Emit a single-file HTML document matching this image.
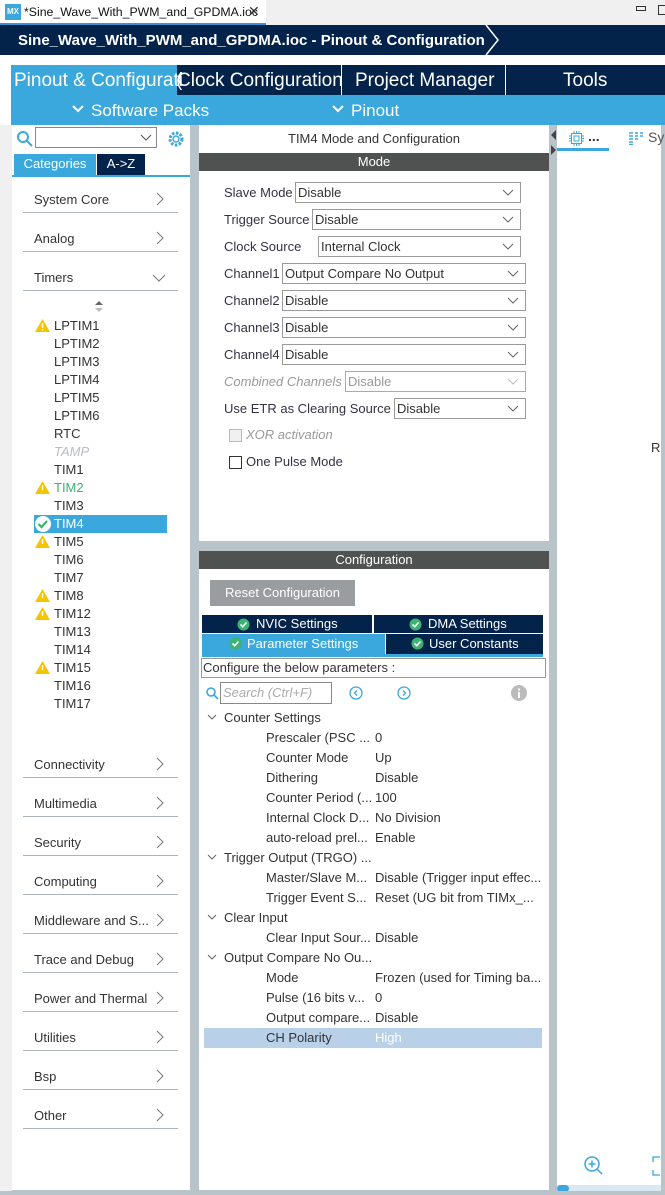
<!DOCTYPE html>
<html><head><meta charset="utf-8"><style>
*{margin:0;padding:0;box-sizing:border-box}
body{width:665px;height:1195px;position:relative;overflow:hidden;background:#b9c4ca;font-family:"Liberation Sans",sans-serif;font-size:13px;color:#333345}
.a{position:absolute;white-space:nowrap}
.t{line-height:18px}
.cb{position:absolute;height:21px;border:1px solid #9a9a9a;background:#fff;line-height:19px;padding-left:2px;font-size:13px;color:#333}
.cb svg{position:absolute;right:6px;top:6px}
.cat{position:absolute;left:34px;font-size:13px;color:#333;line-height:16px}
.ln{position:absolute;left:23px;width:155px;height:1px;background:#aab4ba}
.chev{position:absolute;left:155px}
.ti{position:absolute;left:54px;line-height:18px;font-size:13px;color:#333}
.w{position:absolute;left:35px}
.pr{position:absolute;line-height:20px;font-size:13px;color:#333}
</style></head><body>
<div class="a" style="left:0;top:0;width:665px;height:25px;background:#f0f0f0"></div>
<div class="a" style="left:0;top:0;width:266px;height:25px;background:#fff;border-bottom:2px solid #3d8fd6"></div>
<div class="a" style="left:5px;top:4px;width:16px;height:16px;background:#3aa8dc;color:#fff;font-size:8px;font-weight:bold;line-height:16px;text-align:center">MX</div>
<div class="a t" style="left:24px;top:3px;font-size:12.3px;color:#111">*Sine_Wave_With_PWM_and_GPDMA.ioc</div>
<div class="a" style="left:248px;top:3px;font-size:14px;color:#333">✕</div>
<div class="a" style="left:636px;top:6px;width:10px;height:5px;border:1px solid #333"></div>
<div class="a" style="left:658px;top:5px;width:10px;height:10px;border:1px solid #333"></div>
<div class="a" style="left:0;top:25px;width:665px;height:30px;background:#03234b"></div>
<div class="a" style="left:18px;top:32px;font-size:15px;font-weight:bold;color:#fff">Sine_Wave_With_PWM_and_GPDMA.ioc - Pinout &amp; Configuration</div>
<svg class="a" style="left:484px;top:25px" width="20" height="30"><path d="M2 0 L14 15 L2 30" stroke="#fff" stroke-width="1.5" fill="none"/></svg>
<div class="a" style="left:0;top:55px;width:665px;height:10px;background:#fff"></div>
<div class="a" style="left:0;top:65px;width:11px;height:60px;background:#fff"></div>
<div class="a" style="left:11px;top:65px;width:654px;height:30px;background:#03234b"></div>
<div class="a" style="left:11px;top:65px;width:166px;height:30px;background:#3aa8dc"></div>
<div class="a" style="left:341px;top:65px;width:1px;height:30px;background:#fff"></div>
<div class="a" style="left:505px;top:65px;width:1px;height:30px;background:#fff"></div>
<div class="a" style="left:14px;top:70px;font-size:19px;color:#fff">Pinout &amp; Configurati</div>
<div class="a" style="left:177px;top:70px;font-size:19px;color:#fff;width:164px;overflow:hidden">Clock Configuration</div>
<div class="a" style="left:176px;top:70px;font-size:19px;color:#fff">(</div>
<div class="a" style="left:355px;top:70px;font-size:19px;color:#fff">Project Manager</div>
<div class="a" style="left:563px;top:70px;font-size:19px;color:#fff">Tools</div>
<div class="a" style="left:11px;top:95px;width:654px;height:30px;background:#3aa8dc"></div>
<svg class="a" style="left:71px;top:104px" width="14" height="10"><path d="M2 2 L7 7 L12 2" stroke="#fff" stroke-width="2" fill="none"/></svg>
<div class="a" style="left:91px;top:101px;font-size:17px;color:#fff">Software Packs</div>
<svg class="a" style="left:331px;top:104px" width="14" height="10"><path d="M2 2 L7 7 L12 2" stroke="#fff" stroke-width="2" fill="none"/></svg>
<div class="a" style="left:351px;top:101px;font-size:17px;color:#fff">Pinout</div>
<div class="a" style="left:0;top:125px;width:12px;height:1070px;background:#f0f0f0"></div>
<div class="a" style="left:12px;top:125px;width:178px;height:1065px;background:#fff"></div>
<svg class="a" style="left:16px;top:130px" width="18" height="18"><circle cx="7" cy="7" r="5" stroke="#3aa8dc" stroke-width="2" fill="none"/><path d="M11 11 L16 16" stroke="#3aa8dc" stroke-width="2"/></svg>
<div class="a" style="left:35px;top:127px;width:122px;height:21px;border:1px solid #888;background:#fff"></div>
<svg class="a" style="left:140px;top:134px" width="12" height="8"><path d="M1 1 L6 6 L11 1" stroke="#555" fill="none"/></svg>
<svg class="a" style="left:166px;top:129px" width="20" height="20"><circle cx="10" cy="10" r="6" stroke="#3aa8dc" stroke-width="3" fill="none" stroke-dasharray="2.5 1.5"/><circle cx="10" cy="10" r="3" stroke="#3aa8dc" stroke-width="1.5" fill="none"/></svg>
<div class="a" style="left:14px;top:154px;width:82px;height:21px;background:#3aa8dc;color:#fff;line-height:20px;text-align:center;font-size:13px">Categories</div>
<div class="a" style="left:97px;top:154px;width:48px;height:21px;background:#03234b;color:#fff;line-height:20px;text-align:center;font-size:13px">A-&gt;Z</div>
<div class="a" style="left:12px;top:175px;width:178px;height:2px;background:#3aa8dc"></div>

<div class="cat" style="top:192px">System Core</div><svg class="a chev" style="top:192px" width="10" height="14"><path d="M2 1 L8 7 L2 13" stroke="#777" fill="none"/></svg><div class="ln" style="top:212px"></div>
<div class="cat" style="top:231px">Analog</div><svg class="a chev" style="top:231px" width="10" height="14"><path d="M2 1 L8 7 L2 13" stroke="#777" fill="none"/></svg><div class="ln" style="top:251px"></div>
<div class="cat" style="top:270px">Timers</div><svg class="a" style="left:152px;top:273px" width="14" height="10"><path d="M1 2 L7 8 L13 2" stroke="#777" fill="none"/></svg><div class="ln" style="top:290px"></div>
<svg class="a" style="left:94px;top:300px" width="10" height="14"><path d="M1 5 L5 1 L9 5Z" fill="#666"/><path d="M1 8 L5 12 L9 8Z" fill="#bbb"/></svg>

<svg class="a w" style="top:319px" width="15" height="13"><path d="M7.5 0 L15 13 L0 13Z" fill="#f5c400"/><rect x="6.8" y="4" width="1.4" height="5" fill="#fff"/><rect x="6.8" y="10" width="1.4" height="1.5" fill="#fff"/></svg>
<div class="ti" style="top:317px">LPTIM1</div>
<div class="ti" style="top:335px">LPTIM2</div>
<div class="ti" style="top:353px">LPTIM3</div>
<div class="ti" style="top:371px">LPTIM4</div>
<div class="ti" style="top:389px">LPTIM5</div>
<div class="ti" style="top:407px">LPTIM6</div>
<div class="ti" style="top:425px">RTC</div>
<div class="ti" style="top:443px;color:#b8bcc4;font-style:italic">TAMP</div>
<div class="ti" style="top:461px">TIM1</div>
<svg class="a w" style="top:481px" width="15" height="13"><path d="M7.5 0 L15 13 L0 13Z" fill="#f5c400"/><rect x="6.8" y="4" width="1.4" height="5" fill="#fff"/></svg>
<div class="ti" style="top:479px;color:#3cb371">TIM2</div>
<div class="ti" style="top:497px">TIM3</div>
<div class="a" style="left:34px;top:515px;width:133px;height:18px;background:#3aa8dc"></div>
<svg class="a" style="left:34px;top:515px" width="18" height="18"><circle cx="9" cy="9" r="8" fill="#fff"/><path d="M4.5 9 L7.5 12 L13 6" stroke="#3cb371" stroke-width="2.2" fill="none"/></svg>
<div class="ti" style="top:515px;color:#fff">TIM4</div>
<svg class="a w" style="top:535px" width="15" height="13"><path d="M7.5 0 L15 13 L0 13Z" fill="#f5c400"/><rect x="6.8" y="4" width="1.4" height="5" fill="#fff"/></svg>
<div class="ti" style="top:533px">TIM5</div>
<div class="ti" style="top:551px">TIM6</div>
<div class="ti" style="top:569px">TIM7</div>
<svg class="a w" style="top:589px" width="15" height="13"><path d="M7.5 0 L15 13 L0 13Z" fill="#f5c400"/><rect x="6.8" y="4" width="1.4" height="5" fill="#fff"/></svg>
<div class="ti" style="top:587px">TIM8</div>
<svg class="a w" style="top:607px" width="15" height="13"><path d="M7.5 0 L15 13 L0 13Z" fill="#f5c400"/><rect x="6.8" y="4" width="1.4" height="5" fill="#fff"/></svg>
<div class="ti" style="top:605px">TIM12</div>
<div class="ti" style="top:623px">TIM13</div>
<div class="ti" style="top:641px">TIM14</div>
<svg class="a w" style="top:661px" width="15" height="13"><path d="M7.5 0 L15 13 L0 13Z" fill="#f5c400"/><rect x="6.8" y="4" width="1.4" height="5" fill="#fff"/></svg>
<div class="ti" style="top:659px">TIM15</div>
<div class="ti" style="top:677px">TIM16</div>
<div class="ti" style="top:695px">TIM17</div>

<div class="cat" style="top:757px">Connectivity</div><svg class="a chev" style="top:757px" width="10" height="14"><path d="M2 1 L8 7 L2 13" stroke="#777" fill="none"/></svg><div class="ln" style="top:777px"></div>
<div class="cat" style="top:796px">Multimedia</div><svg class="a chev" style="top:796px" width="10" height="14"><path d="M2 1 L8 7 L2 13" stroke="#777" fill="none"/></svg><div class="ln" style="top:816px"></div>
<div class="cat" style="top:835px">Security</div><svg class="a chev" style="top:835px" width="10" height="14"><path d="M2 1 L8 7 L2 13" stroke="#777" fill="none"/></svg><div class="ln" style="top:855px"></div>
<div class="cat" style="top:874px">Computing</div><svg class="a chev" style="top:874px" width="10" height="14"><path d="M2 1 L8 7 L2 13" stroke="#777" fill="none"/></svg><div class="ln" style="top:894px"></div>
<div class="cat" style="top:913px">Middleware and S...</div><svg class="a chev" style="top:913px" width="10" height="14"><path d="M2 1 L8 7 L2 13" stroke="#777" fill="none"/></svg><div class="ln" style="top:933px"></div>
<div class="cat" style="top:952px">Trace and Debug</div><svg class="a chev" style="top:952px" width="10" height="14"><path d="M2 1 L8 7 L2 13" stroke="#777" fill="none"/></svg><div class="ln" style="top:972px"></div>
<div class="cat" style="top:991px">Power and Thermal</div><svg class="a chev" style="top:991px" width="10" height="14"><path d="M2 1 L8 7 L2 13" stroke="#777" fill="none"/></svg><div class="ln" style="top:1011px"></div>
<div class="cat" style="top:1030px">Utilities</div><svg class="a chev" style="top:1030px" width="10" height="14"><path d="M2 1 L8 7 L2 13" stroke="#777" fill="none"/></svg><div class="ln" style="top:1050px"></div>
<div class="cat" style="top:1069px">Bsp</div><svg class="a chev" style="top:1069px" width="10" height="14"><path d="M2 1 L8 7 L2 13" stroke="#777" fill="none"/></svg><div class="ln" style="top:1089px"></div>
<div class="cat" style="top:1108px">Other</div><svg class="a chev" style="top:1108px" width="10" height="14"><path d="M2 1 L8 7 L2 13" stroke="#777" fill="none"/></svg><div class="ln" style="top:1128px"></div>

<div class="a" style="left:199px;top:125px;width:350px;height:416px;background:#fff"></div>
<div class="a" style="left:199px;top:131px;width:350px;text-align:center;font-size:13px;color:#333">TIM4 Mode and Configuration</div>
<div class="a" style="left:199px;top:153px;width:350px;height:18px;background:#505251;color:#fff;text-align:center;line-height:18px;font-size:13px">Mode</div>

<div class="a t" style="left:224px;top:184px">Slave Mode</div>
<div class="cb" style="left:295px;top:182px;width:226px">Disable<svg width="12" height="8"><path d="M1 1 L6 6 L11 1" stroke="#666" fill="none"/></svg></div>
<div class="a t" style="left:224px;top:211px">Trigger Source</div>
<div class="cb" style="left:312px;top:209px;width:209px">Disable<svg width="12" height="8"><path d="M1 1 L6 6 L11 1" stroke="#666" fill="none"/></svg></div>
<div class="a t" style="left:224px;top:238px">Clock Source</div>
<div class="cb" style="left:318px;top:236px;width:203px">Internal Clock<svg width="12" height="8"><path d="M1 1 L6 6 L11 1" stroke="#666" fill="none"/></svg></div>
<div class="a t" style="left:224px;top:265px">Channel1</div>
<div class="cb" style="left:282px;top:263px;width:244px">Output Compare No Output<svg width="12" height="8"><path d="M1 1 L6 6 L11 1" stroke="#666" fill="none"/></svg></div>
<div class="a t" style="left:224px;top:292px">Channel2</div>
<div class="cb" style="left:282px;top:290px;width:244px">Disable<svg width="12" height="8"><path d="M1 1 L6 6 L11 1" stroke="#666" fill="none"/></svg></div>
<div class="a t" style="left:224px;top:319px">Channel3</div>
<div class="cb" style="left:282px;top:317px;width:244px">Disable<svg width="12" height="8"><path d="M1 1 L6 6 L11 1" stroke="#666" fill="none"/></svg></div>
<div class="a t" style="left:224px;top:346px">Channel4</div>
<div class="cb" style="left:282px;top:344px;width:244px">Disable<svg width="12" height="8"><path d="M1 1 L6 6 L11 1" stroke="#666" fill="none"/></svg></div>
<div class="a t" style="left:224px;top:373px;color:#999;font-style:italic">Combined Channels</div>
<div class="cb" style="left:345px;top:371px;width:181px;color:#999;border-color:#aaa">Disable<svg width="12" height="8"><path d="M1 1 L6 6 L11 1" stroke="#bbb" fill="none"/></svg></div>
<div class="a t" style="left:224px;top:400px">Use ETR as Clearing Source</div>
<div class="cb" style="left:394px;top:398px;width:132px">Disable<svg width="12" height="8"><path d="M1 1 L6 6 L11 1" stroke="#666" fill="none"/></svg></div>
<div class="a" style="left:229px;top:429px;width:13px;height:13px;border:1px solid #bbb;background:#f0f0f0"></div>
<div class="a t" style="left:246px;top:426px;color:#999;font-style:italic">XOR activation</div>
<div class="a" style="left:229px;top:456px;width:13px;height:13px;border:1px solid #333;background:#fff"></div>
<div class="a t" style="left:246px;top:453px">One Pulse Mode</div>

<div class="a" style="left:199px;top:551px;width:350px;height:639px;background:#fff"></div>
<div class="a" style="left:199px;top:551px;width:350px;height:18px;background:#505251;color:#fff;text-align:center;line-height:18px;font-size:13px">Configuration</div>
<div class="a" style="left:210px;top:580px;width:145px;height:26px;background:#9a9d9f;color:#fff;text-align:center;line-height:26px;font-size:13px">Reset Configuration</div>
<div class="a" style="left:202px;top:615px;width:170px;height:18px;background:#03234b"></div>
<div class="a" style="left:374px;top:615px;width:169px;height:18px;background:#03234b"></div>
<div class="a" style="left:202px;top:634px;width:183px;height:20px;background:#3aa8dc"></div>
<div class="a" style="left:386px;top:634px;width:157px;height:20px;background:#03234b"></div>
<div class="a" style="left:202px;top:654px;width:341px;height:3px;background:#3aa8dc"></div>
<svg class="a" style="left:237px;top:618px" width="13" height="13"><circle cx="6.5" cy="6.5" r="6" fill="#3cb371"/><path d="M3.5 6.5 L5.7 8.7 L9.5 4.5" stroke="#fff" stroke-width="1.6" fill="none"/></svg>
<div class="a t" style="left:256px;top:615px;color:#fff">NVIC Settings</div>
<svg class="a" style="left:409px;top:618px" width="13" height="13"><circle cx="6.5" cy="6.5" r="6" fill="#3cb371"/><path d="M3.5 6.5 L5.7 8.7 L9.5 4.5" stroke="#fff" stroke-width="1.6" fill="none"/></svg>
<div class="a t" style="left:428px;top:615px;color:#fff">DMA Settings</div>
<svg class="a" style="left:229px;top:637px" width="13" height="13"><circle cx="6.5" cy="6.5" r="6" fill="#3cb371"/><path d="M3.5 6.5 L5.7 8.7 L9.5 4.5" stroke="#fff" stroke-width="1.6" fill="none"/></svg>
<div class="a t" style="left:247px;top:635px;color:#fff">Parameter Settings</div>
<svg class="a" style="left:411px;top:637px" width="13" height="13"><circle cx="6.5" cy="6.5" r="6" fill="#3cb371"/><path d="M3.5 6.5 L5.7 8.7 L9.5 4.5" stroke="#fff" stroke-width="1.6" fill="none"/></svg>
<div class="a t" style="left:429px;top:635px;color:#fff">User Constants</div>
<div class="a" style="left:201px;top:658px;width:345px;height:20px;border:1px solid #999;line-height:18px;padding-left:1px;color:#333">Configure the below parameters :</div>
<svg class="a" style="left:206px;top:687px" width="13" height="13"><circle cx="5" cy="5" r="4" stroke="#3aa8dc" stroke-width="1.6" fill="none"/><path d="M8 8 L12 12" stroke="#3aa8dc" stroke-width="1.6"/></svg>
<div class="a" style="left:220px;top:682px;width:112px;height:22px;border:1px solid #888;line-height:20px;padding-left:2px;color:#aaa;font-style:italic">Search (Ctrl+F)</div>
<svg class="a" style="left:349px;top:686px" width="14" height="14"><circle cx="7" cy="7" r="6" stroke="#3aa8dc" stroke-width="1.3" fill="none"/><path d="M8 4.5 L5.5 7 L8 9.5" stroke="#3aa8dc" stroke-width="1.3" fill="none"/></svg>
<svg class="a" style="left:397px;top:686px" width="14" height="14"><circle cx="7" cy="7" r="6" stroke="#3aa8dc" stroke-width="1.3" fill="none"/><path d="M6 4.5 L8.5 7 L6 9.5" stroke="#3aa8dc" stroke-width="1.3" fill="none"/></svg>
<svg class="a" style="left:511px;top:685px" width="16" height="16"><circle cx="8" cy="8" r="8" fill="#bbb"/><rect x="7" y="7" width="2" height="6" fill="#fff"/><rect x="7" y="3.5" width="2" height="2" fill="#fff"/></svg>

<div class="a" style="left:204px;top:1028px;width:338px;height:20px;background:#b8d0e8"></div>
<svg class="a" style="left:207px;top:714px" width="10" height="8"><path d="M1 1 L5 5 L9 1" stroke="#666" fill="none"/></svg>
<div class="pr" style="left:224px;top:708px">Counter Settings</div>
<div class="pr" style="left:266px;top:728px">Prescaler (PSC ...</div><div class="pr" style="left:375px;top:728px">0</div>
<div class="pr" style="left:266px;top:748px">Counter Mode</div><div class="pr" style="left:375px;top:748px">Up</div>
<div class="pr" style="left:266px;top:768px">Dithering</div><div class="pr" style="left:375px;top:768px">Disable</div>
<div class="pr" style="left:266px;top:788px">Counter Period (...</div><div class="pr" style="left:375px;top:788px">100</div>
<div class="pr" style="left:266px;top:808px">Internal Clock D...</div><div class="pr" style="left:375px;top:808px">No Division</div>
<div class="pr" style="left:266px;top:828px">auto-reload prel...</div><div class="pr" style="left:375px;top:828px">Enable</div>
<svg class="a" style="left:207px;top:854px" width="10" height="8"><path d="M1 1 L5 5 L9 1" stroke="#666" fill="none"/></svg>
<div class="pr" style="left:224px;top:848px">Trigger Output (TRGO) ...</div>
<div class="pr" style="left:266px;top:868px">Master/Slave M...</div><div class="pr" style="left:375px;top:868px">Disable (Trigger input effec...</div>
<div class="pr" style="left:266px;top:888px">Trigger Event S...</div><div class="pr" style="left:375px;top:888px">Reset (UG bit from TIMx_...</div>
<svg class="a" style="left:207px;top:914px" width="10" height="8"><path d="M1 1 L5 5 L9 1" stroke="#666" fill="none"/></svg>
<div class="pr" style="left:224px;top:908px">Clear Input</div>
<div class="pr" style="left:266px;top:928px">Clear Input Sour...</div><div class="pr" style="left:375px;top:928px">Disable</div>
<svg class="a" style="left:207px;top:954px" width="10" height="8"><path d="M1 1 L5 5 L9 1" stroke="#666" fill="none"/></svg>
<div class="pr" style="left:224px;top:948px">Output Compare No Ou...</div>
<div class="pr" style="left:266px;top:968px">Mode</div><div class="pr" style="left:375px;top:968px">Frozen (used for Timing ba...</div>
<div class="pr" style="left:266px;top:988px">Pulse (16 bits v...</div><div class="pr" style="left:375px;top:988px">0</div>
<div class="pr" style="left:266px;top:1008px">Output compare...</div><div class="pr" style="left:375px;top:1008px">Disable</div>
<div class="pr" style="left:266px;top:1028px">CH Polarity</div><div class="pr" style="left:375px;top:1028px;color:#fff">High</div>

<div class="a" style="left:550px;top:125px;width:7px;height:1070px;background:#b9c4ca"></div>
<svg class="a" style="left:550px;top:128px" width="7" height="30"><path d="M6 2 L1 7 L6 12Z" fill="#444"/><path d="M1 17 L6 22 L1 27Z" fill="#444"/></svg>
<div class="a" style="left:557px;top:125px;width:104px;height:1065px;background:#fff"></div>
<svg class="a" style="left:569px;top:131px" width="15" height="15"><rect x="2.5" y="2.5" width="10" height="10" stroke="#3aa8dc" fill="none"/><rect x="5" y="5" width="5" height="5" stroke="#3aa8dc" fill="none"/><path d="M5 0V2M7.5 0V2M10 0V2M5 13V15M7.5 13V15M10 13V15M0 5H2M0 7.5H2M0 10H2M13 5H15M13 7.5H15M13 10H15" stroke="#3aa8dc"/></svg>
<div class="a" style="left:588px;top:128px;font-size:14px;color:#333;font-weight:bold">...</div>
<div class="a" style="left:557px;top:148px;width:52px;height:3px;background:#3aa8dc"></div>
<svg class="a" style="left:629px;top:132px" width="14" height="13"><path d="M0 1H4M6 1H9M11 1H14M0 4H4M6 4H9M11 4H14M0 7H4M6 7H9M0 10H4M0 12.5H4" stroke="#3aa8dc" stroke-width="1.5"/></svg>
<div class="a" style="left:648px;top:129px;font-size:14px;color:#555">Sy</div>
<div class="a" style="left:661px;top:150px;width:4px;height:1045px;background:#b9c4ca"></div>
<div class="a" style="left:651px;top:440px;font-size:13px;color:#333">R</div>
<svg class="a" style="left:583px;top:1155px" width="22" height="22"><circle cx="9" cy="9" r="7" stroke="#3aa8dc" stroke-width="1.5" fill="none"/><path d="M9 5.5V12.5M5.5 9H12.5M14 14L19 19" stroke="#3aa8dc" stroke-width="1.5"/></svg>
<svg class="a" style="left:652px;top:1156px" width="10" height="20"><path d="M8 1H1V6M1 14V19H8" stroke="#3aa8dc" stroke-width="1.3" fill="none"/></svg>
<div class="a" style="left:557px;top:1185px;width:104px;height:6px;background:#dbe8f2"></div>
<div class="a" style="left:557px;top:1185px;width:12px;height:7px;border-radius:4px;background:#3aa8dc"></div>
<div class="a" style="left:0;top:1191px;width:665px;height:4px;background:#b9c4ca"></div>
</body></html>
